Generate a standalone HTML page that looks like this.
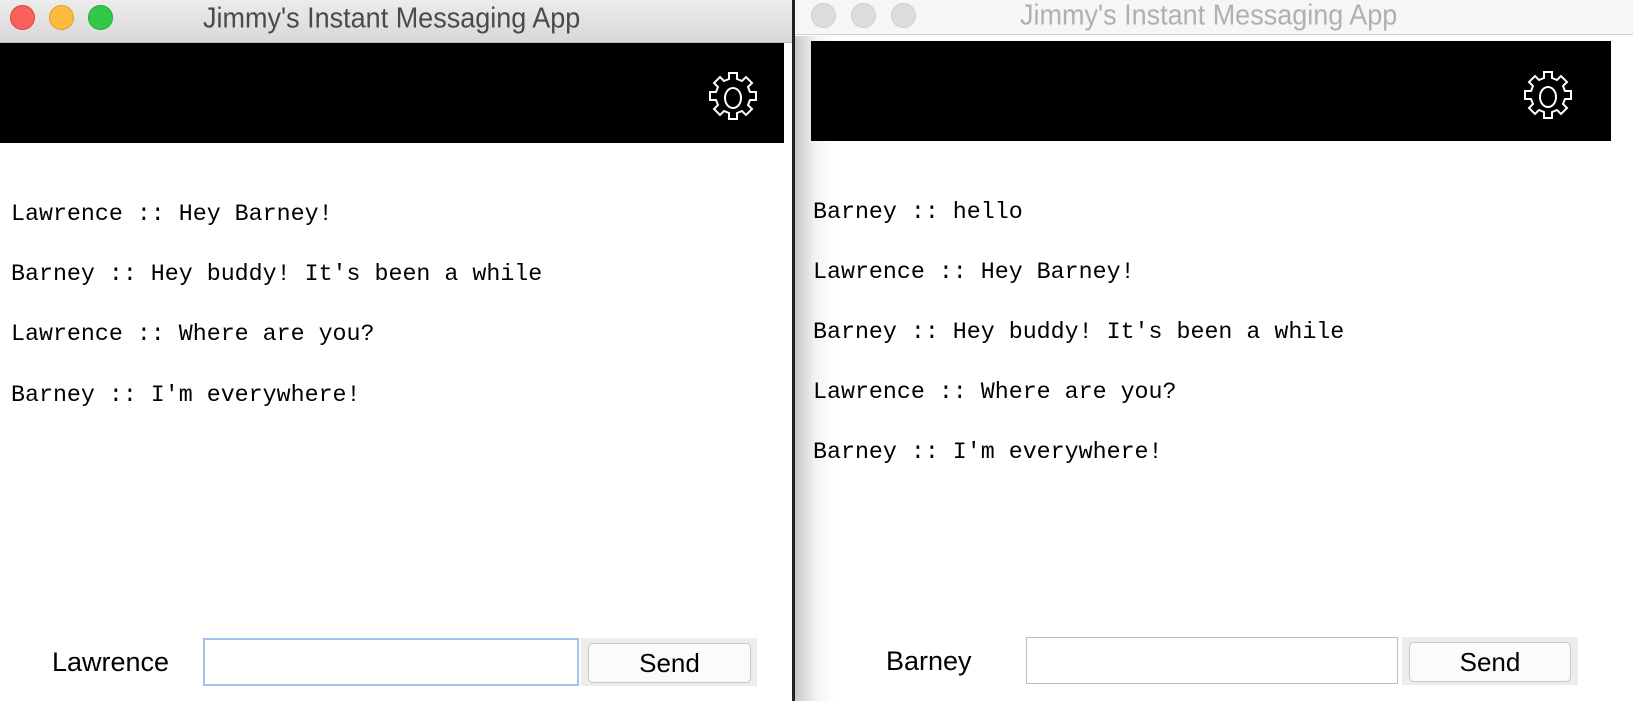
<!DOCTYPE html>
<html><head><meta charset="utf-8"><style>
*{margin:0;padding:0;box-sizing:border-box}
body{width:1633px;height:701px;overflow:hidden;background:#fff;position:relative;font-family:"Liberation Sans",sans-serif}
.abs{position:absolute}
.tb{top:0;height:43px;background:linear-gradient(#ececec,#d8d8d8);border-bottom:1px solid #b8b8b8}
.dot{width:25px;height:25px;border-radius:50%;top:5px}
.title{top:3px;font-size:27px;white-space:nowrap;transform:scaleY(1.05)}
.bar{background:#000}
.msg{font-family:"Liberation Mono","DejaVu Sans Mono",monospace;font-size:23.3px;color:#000;white-space:pre}
.lbl{font-size:27px;color:#000}
.inp{background:#fff;border:1px solid #bbb}
.bbg{background:#ececec}
.btn{background:#fbfbfb;border:1px solid #c8c8c8;border-radius:5px;font-size:26px;text-align:center}
</style></head><body>
<!-- left window -->
<div class="abs tb" style="left:0;width:793px"></div>
<div class="abs dot" style="left:10px;background:#fc605c;border:1px solid #e0443e"></div>
<div class="abs dot" style="left:49px;background:#fdbc40;border:1px solid #dea123"></div>
<div class="abs dot" style="left:88px;background:#34c84a;border:1px solid #27aa35"></div>
<div class="abs title" style="left:203px;color:#4a4a4a">Jimmy's Instant Messaging App</div>
<div class="abs bar" style="left:0;top:43px;width:784px;height:100px"></div>
<svg class="abs" style="left:709px;top:72px" width="48" height="52" viewBox="0 0 48 52">
<path d="M20 1h8v6l5 2 4-4 6 6-4 4 2 5h6v8h-6l-2 5 4 4-6 6-4-4-5 2v6h-8v-6l-5-2-4 4-6-6 4-4-2-5H1v-8h6l2-5-4-4 6-6 4 4 5-2z" fill="none" stroke="#fff" stroke-width="2"/>
<ellipse cx="24" cy="26" rx="8" ry="10" fill="none" stroke="#fff" stroke-width="2"/>
</svg>
<div class="abs msg" style="left:11px;top:201px">Lawrence :: Hey Barney!</div>
<div class="abs msg" style="left:11px;top:261px">Barney :: Hey buddy! It's been a while</div>
<div class="abs msg" style="left:11px;top:321px">Lawrence :: Where are you?</div>
<div class="abs msg" style="left:11px;top:382px">Barney :: I'm everywhere!</div>
<div class="abs lbl" style="left:52px;top:647px">Lawrence</div>
<div class="abs inp" style="left:203px;top:638px;width:376px;height:48px;border:2px solid #9cc3f0"></div>
<div class="abs bbg" style="left:581px;top:638px;width:176px;height:48px"></div>
<div class="abs btn" style="left:588px;top:643px;width:163px;height:40px;line-height:38px">Send</div>
<!-- divider -->
<div class="abs" style="left:792px;top:0;width:3px;height:701px;background:#222"></div>
<!-- right window -->
<div class="abs tb" style="left:795px;width:838px;top:0;height:35px;background:#f6f6f6;border-bottom:1px solid #d0d0d0"></div>
<div class="abs dot" style="left:811px;top:3px;background:#dcdcdc;border:1px solid #cfcfcf"></div>
<div class="abs dot" style="left:851px;top:3px;background:#dcdcdc;border:1px solid #cfcfcf"></div>
<div class="abs dot" style="left:891px;top:3px;background:#dcdcdc;border:1px solid #cfcfcf"></div>
<div class="abs title" style="left:1020px;top:0px;color:#b0b0b0">Jimmy's Instant Messaging App</div>
<div class="abs" style="left:795px;top:36px;width:40px;height:665px;background:linear-gradient(90deg,#c8c8c8,#f2f2f2 50%,#fff)"></div>
<div class="abs bar" style="left:811px;top:41px;width:800px;height:100px"></div>
<svg class="abs" style="left:1524px;top:71px" width="48" height="52" viewBox="0 0 48 52">
<path d="M20 1h8v6l5 2 4-4 6 6-4 4 2 5h6v8h-6l-2 5 4 4-6 6-4-4-5 2v6h-8v-6l-5-2-4 4-6-6 4-4-2-5H1v-8h6l2-5-4-4 6-6 4 4 5-2z" fill="none" stroke="#fff" stroke-width="2"/>
<ellipse cx="24" cy="26" rx="8" ry="10" fill="none" stroke="#fff" stroke-width="2"/>
</svg>
<div class="abs msg" style="left:813px;top:199px">Barney :: hello</div>
<div class="abs msg" style="left:813px;top:259px">Lawrence :: Hey Barney!</div>
<div class="abs msg" style="left:813px;top:319px">Barney :: Hey buddy! It's been a while</div>
<div class="abs msg" style="left:813px;top:379px">Lawrence :: Where are you?</div>
<div class="abs msg" style="left:813px;top:439px">Barney :: I'm everywhere!</div>
<div class="abs lbl" style="left:886px;top:646px">Barney</div>
<div class="abs inp" style="left:1026px;top:637px;width:372px;height:47px"></div>
<div class="abs bbg" style="left:1402px;top:637px;width:176px;height:48px"></div>
<div class="abs btn" style="left:1409px;top:642px;width:162px;height:40px;line-height:38px">Send</div>
</body></html>
